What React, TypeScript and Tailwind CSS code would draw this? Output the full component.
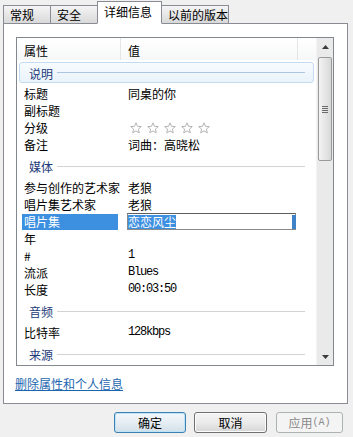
import React from 'react'

function Star() {
  return (
    <svg width="12" height="12" viewBox="0 0 12 12">
      <polygon
        points="6,0.8 7.5,4.3 11.3,4.6 8.4,7.1 9.3,10.8 6,8.9 2.7,10.8 3.6,7.1 0.7,4.6 4.5,4.3"
        fill="white"
        stroke="#b4b4b4"
        strokeWidth="1"
        strokeLinejoin="round"
      />
    </svg>
  )
}

function Row({ label, value, mono }: { label: string; value?: React.ReactNode; mono?: boolean }) {
  return (
    <div className="flex h-[17px] items-center text-[12px] leading-[17px] text-black">
      <div className="w-[104px] shrink-0 whitespace-nowrap pl-[7px]">{label}</div>
      <div
        className={
          mono
            ? "whitespace-nowrap pl-[7px] font-['Liberation_Mono',monospace] text-[12px] tracking-[-1.2px]"
            : 'whitespace-nowrap pl-[7px]'
        }
      >
        {value}
      </div>
    </div>
  )
}

function Section({ title, active, h }: { title: string; active?: boolean; h: string }) {
  return (
    <div className={`${h} px-[2px] py-[2px]`}>
      <div
        className={`flex h-full items-center gap-[4px] rounded-[3px] border pl-[9px] pr-[8px] ${
          active ? 'border-[#c4dcf1] bg-gradient-to-b from-[#f7fbfe] to-[#eaf3fb]' : 'border-transparent'
        }`}
      >
        <span className="pt-[1px] text-[12px] leading-[15px] text-[#1e3b7a]">{title}</span>
        <div className={`h-px flex-1 ${active ? 'bg-[#a9c6e2]' : 'bg-[#d3d3d3]'}`} />
      </div>
    </div>
  )
}

function Tab({ label, w, active, first }: { label: string; w: string; active?: boolean; first?: boolean }) {
  return (
    <div
      className={`${w} ${first ? '' : '-ml-px'} flex items-center border border-[#898c95] pl-[6px] text-[12px] text-black ${
        active
          ? 'relative z-10 h-[23px] border-b-white bg-white pb-[2px]'
          : 'h-[19px] bg-gradient-to-b from-[#f5f5f5] to-[#d9d9d9]'
      }`}
    >
      {label}
    </div>
  )
}

export default function App() {
  return (
    <div className="h-[437px] w-[353px] overflow-hidden bg-[#f0f0f0] font-['Noto_Sans_CJK_SC',sans-serif]">
      {/* tabs */}
      <div className="relative z-10 -mb-px flex h-[24px] items-end pl-[3px]">
        <Tab label="常规" w="w-[48px]" first />
        <Tab label="安全" w="w-[48px]" />
        <Tab label="详细信息" w="w-[65px]" active />
        <Tab label="以前的版本" w="w-[68px]" />
      </div>

      {/* panel */}
      <div className="ml-[3px] flex h-[381px] w-[345px] flex-col border border-[#898c95] bg-white">
        <div className="ml-[12px] mt-[13px] flex h-[329px] w-[318px] border border-[#828790] bg-white">
          <div className="w-[299px] overflow-hidden">
            {/* header */}
            <div className="flex h-[22px] bg-gradient-to-b from-white to-[#f6f7f8] text-[12px] text-black">
              <div className="flex h-full w-[104px] items-center border-r border-[#e4e5e6] pl-[7px] pt-[3px]">属性</div>
              <div className="flex h-full w-[177px] items-center border-r border-[#e4e5e6] pl-[7px] pt-[3px]">值</div>
            </div>

            <Section title="说明" active h="h-[25px]" />
            <Row label="标题" value="同桌的你" />
            <Row label="副标题" />
            <Row
              label="分级"
              value={
                <div className="flex gap-[5px] pl-[2px]">
                  <Star />
                  <Star />
                  <Star />
                  <Star />
                  <Star />
                </div>
              }
            />
            <Row label="备注" value="词曲：高晓松" />

            <Section title="媒体" h="h-[26px]" />
            <Row label="参与创作的艺术家" value="老狼" />
            <Row label="唱片集艺术家" value="老狼" />

            {/* selected / editing row */}
            <div className="flex h-[17px] items-center text-[12px]">
              <div className="w-[104px] shrink-0 pl-[5px]">
                <div className="h-[16px] w-[96px] bg-[#3d8fe0] pl-[2px] leading-[16px] text-white">唱片集</div>
              </div>
              <div className="pl-[6px]">
                <div className="relative flex h-[17px] w-[169px] items-center border border-[#8a8a8a] border-t-[#5e5e5e] bg-white">
                  <span className="bg-[#3d8fe0] leading-[14px] text-white">恋恋风尘</span>
                  <div className="absolute -right-[1px] top-[1px] h-[14px] w-[4px] bg-[#3f82c8]" />
                </div>
              </div>
            </div>

            <Row label="年" />
            <Row label="#" value="1" mono />
            <Row label="流派" value="Blues" mono />
            <Row label="长度" value="00:03:50" mono />

            <Section title="音频" h="h-[26px]" />
            <Row label="比特率" value="128kbps" mono />

            <Section title="来源" h="h-[26px]" />
          </div>

          {/* scrollbar */}
          <div className="flex w-[17px] flex-col border-l border-[#f4f4f4] bg-[#eaeaea]">
            <div className="flex h-[17px] items-center justify-center">
              <svg width="7" height="4" viewBox="0 0 7 4">
                <polygon points="3.5,0 7,4 0,4" fill="#3b3b3b" />
              </svg>
            </div>
            <div className="mx-[1px] mt-[2px] flex h-[104px] items-center justify-center rounded-[2px] border border-[#9a9a9a] bg-gradient-to-r from-[#f4f4f4] to-[#d8d8d8]">
              <div className="flex flex-col gap-[1px]">
                <div className="h-px w-[6px] bg-[#6a6a6a]" />
                <div className="h-px w-[6px] bg-[#6a6a6a]" />
                <div className="h-px w-[6px] bg-[#6a6a6a]" />
                <div className="h-px w-[6px] bg-[#6a6a6a]" />
              </div>
            </div>
            <div className="flex-1" />
            <div className="flex h-[17px] items-center justify-center">
              <svg width="7" height="4" viewBox="0 0 7 4">
                <polygon points="0,0 7,0 3.5,4" fill="#3b3b3b" />
              </svg>
            </div>
          </div>
        </div>

        <div className="ml-[11px] mt-[10px] text-[12px] leading-[15px]">
          <span className="text-[#1c66b0] underline">删除属性和个人信息</span>
        </div>
      </div>

      {/* buttons */}
      <div className="mt-[8px] flex h-[21px] justify-end gap-[8px] pr-[10px] text-[12px]">
        <button className="flex h-full w-[72px] items-center justify-center rounded-[3px] border border-[#3c7fb1] bg-gradient-to-b from-[#f3f7fa] via-[#e6eef4] to-[#d3dfe8] text-black shadow-[inset_0_0_0_1px_#bfe3f7]">
          确定
        </button>
        <button className="flex h-full w-[73px] items-center justify-center rounded-[3px] border border-[#707070] bg-gradient-to-b from-[#f4f4f4] via-[#ebebeb] to-[#d6d6d6] text-black shadow-[inset_0_0_0_1px_#fcfcfc]">
          取消
        </button>
        <button className="ml-px flex h-full w-[67px] items-center justify-center rounded-[3px] border border-[#adb2b5] bg-[#f4f4f4] text-[#8a8a8a]">
          应用<span className="font-['Liberation_Mono',monospace] text-[10px]">(A)</span>
        </button>
      </div>
    </div>
  )
}
